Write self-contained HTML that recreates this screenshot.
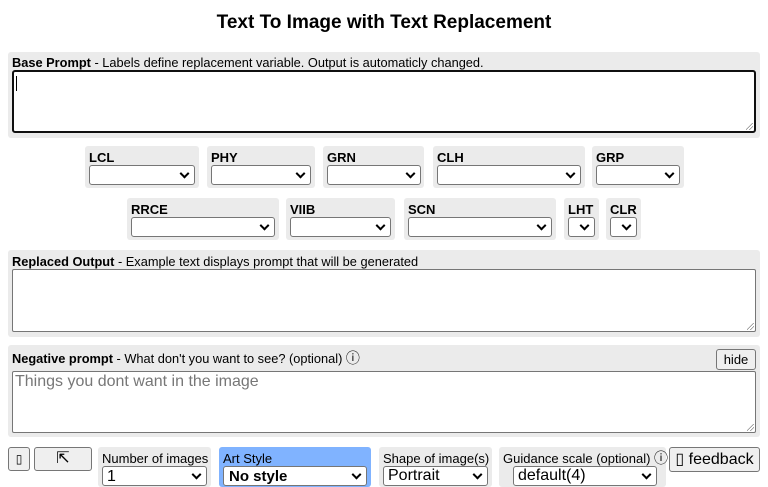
<!DOCTYPE html>
<html><head><meta charset="utf-8"><style>
*{box-sizing:border-box;margin:0;padding:0}
body{width:768px;height:480px;overflow:hidden;background:#fff;font-family:"Liberation Sans",sans-serif;color:#000;position:relative}
.a{position:absolute;white-space:nowrap}
.panel{position:absolute;background:#ebebeb;border-radius:3px}
.lab{position:absolute;font-size:12.8px;white-space:nowrap;line-height:15px}
.ta{position:absolute;background:#fff;border:1px solid #767676;border-radius:2px}
.ta:after{content:"";position:absolute;right:1px;bottom:1px;width:7px;height:7px;background:linear-gradient(135deg,transparent 45%,#888 46%,#888 52%,transparent 53%,transparent 70%,#888 71%,#888 77%,transparent 78%)}
.sb{position:absolute;background:#ebebeb;border-radius:3px}
.sb b{position:absolute;left:4px;top:4px;font-size:13px}
.sel{position:absolute;background:#fff;border:1px solid #767676;border-radius:3px;overflow:hidden}
.sel:after{content:"";position:absolute;right:6px;top:50%;width:5px;height:5px;border-right:2px solid #000;border-bottom:2px solid #000;transform:translateY(-70%) rotate(45deg)}
.btn{position:absolute;background:#efefef;border:1px solid #767676;border-radius:3px;text-align:center;white-space:nowrap}
.i{font-size:14px;line-height:14px}
</style></head><body>
<div class="a" style="left:0;width:768px;top:12px;text-align:center;font-weight:bold;font-size:19px">Text To Image with Text Replacement</div>

<div class="panel" style="left:8px;top:52px;width:752px;height:86px"></div>
<div class="lab" style="left:12px;top:55px"><b>Base Prompt</b> - Labels define replacement variable. Output is automaticly changed.</div>
<div class="ta" style="left:12px;top:70px;width:744px;height:63px;border:2px solid #101010;border-radius:3px"><div class="a" style="left:2px;top:4px;width:1px;height:15px;background:#000"></div></div>

<div class="sb" style="left:85px;top:146px;width:114px;height:42px"><b>LCL</b><div class="sel" style="left:4px;top:19px;width:106px;height:20px"></div></div>
<div class="sb" style="left:207px;top:146px;width:108px;height:42px"><b>PHY</b><div class="sel" style="left:4px;top:19px;width:100px;height:20px"></div></div>
<div class="sb" style="left:323px;top:146px;width:101px;height:42px"><b>GRN</b><div class="sel" style="left:4px;top:19px;width:94px;height:20px"></div></div>
<div class="sb" style="left:433px;top:146px;width:152px;height:42px"><b>CLH</b><div class="sel" style="left:4px;top:19px;width:144px;height:20px"></div></div>
<div class="sb" style="left:592px;top:146px;width:92px;height:42px"><b>GRP</b><div class="sel" style="left:4px;top:19px;width:84px;height:20px"></div></div>

<div class="sb" style="left:127px;top:198px;width:152px;height:42px"><b>RRCE</b><div class="sel" style="left:4px;top:19px;width:144px;height:20px"></div></div>
<div class="sb" style="left:286px;top:198px;width:109px;height:42px"><b>VIIB</b><div class="sel" style="left:4px;top:19px;width:101px;height:20px"></div></div>
<div class="sb" style="left:404px;top:198px;width:152px;height:42px"><b>SCN</b><div class="sel" style="left:4px;top:19px;width:144px;height:20px"></div></div>
<div class="sb" style="left:564px;top:198px;width:35px;height:42px"><b>LHT</b><div class="sel" style="left:4px;top:19px;width:27px;height:20px"></div></div>
<div class="sb" style="left:606px;top:198px;width:35px;height:42px"><b>CLR</b><div class="sel" style="left:4px;top:19px;width:27px;height:20px"></div></div>

<div class="panel" style="left:8px;top:250px;width:752px;height:87px"></div>
<div class="lab" style="left:12px;top:254px"><b>Replaced Output</b> - Example text displays prompt that will be generated</div>
<div class="ta" style="left:12px;top:269px;width:744px;height:63px"></div>

<div class="panel" style="left:8px;top:345px;width:752px;height:92px"></div>
<div class="lab" style="left:12px;top:351px"><b>Negative prompt</b> - What don't you want to see? (optional) <span class="i">ⓘ</span></div>
<div class="btn" style="left:716px;top:349px;width:40px;height:21px;font-size:13px;line-height:19px">hide</div>
<div class="ta" style="left:12px;top:371px;width:744px;height:62px"><div class="a" style="left:2px;top:1px;font-size:16px;color:#777">Things you dont want in the image</div></div>

<div class="btn" style="left:8px;top:447px;width:22px;height:24px;font-size:12px;line-height:22px">▯</div>
<div class="btn" style="left:34px;top:447px;width:58px;height:24px;font-size:16px;line-height:22px">⇱</div>
<div class="sb" style="left:98px;top:447px;width:113px;height:40px"><div class="a" style="left:4px;top:4px;font-size:13px">Number of images</div><div class="sel" style="left:4px;top:19px;width:105px;height:20px"><span class="a" style="left:4px;top:1px;font-size:16px">1</span></div></div>
<div class="sb" style="left:219px;top:447px;width:152px;height:40px;background:#80b3ff"><div class="a" style="left:4px;top:4px;font-size:13px">Art Style</div><div class="sel" style="left:4px;top:19px;width:144px;height:20px"><span class="a" style="left:5px;top:1px;font-size:15px;font-weight:bold">No style</span></div></div>
<div class="sb" style="left:379px;top:447px;width:113px;height:40px"><div class="a" style="left:4px;top:4px;font-size:13px">Shape of image(s)</div><div class="sel" style="left:4px;top:19px;width:105px;height:20px"><span class="a" style="left:4px;top:0px;font-size:16px">Portrait</span></div></div>
<div class="sb" style="left:499px;top:447px;width:167px;height:40px"><div class="a" style="left:4px;top:4px;font-size:13px;line-height:15px">Guidance scale (optional) <span class="i">ⓘ</span></div><div class="sel" style="left:14px;top:19px;width:144px;height:20px"><span class="a" style="left:4px;top:0px;font-size:16px">default(4)</span></div></div>
<div class="btn" style="left:669px;top:447px;width:91px;height:25px;font-size:16px;line-height:23px">▯ feedback</div>
</body></html>
